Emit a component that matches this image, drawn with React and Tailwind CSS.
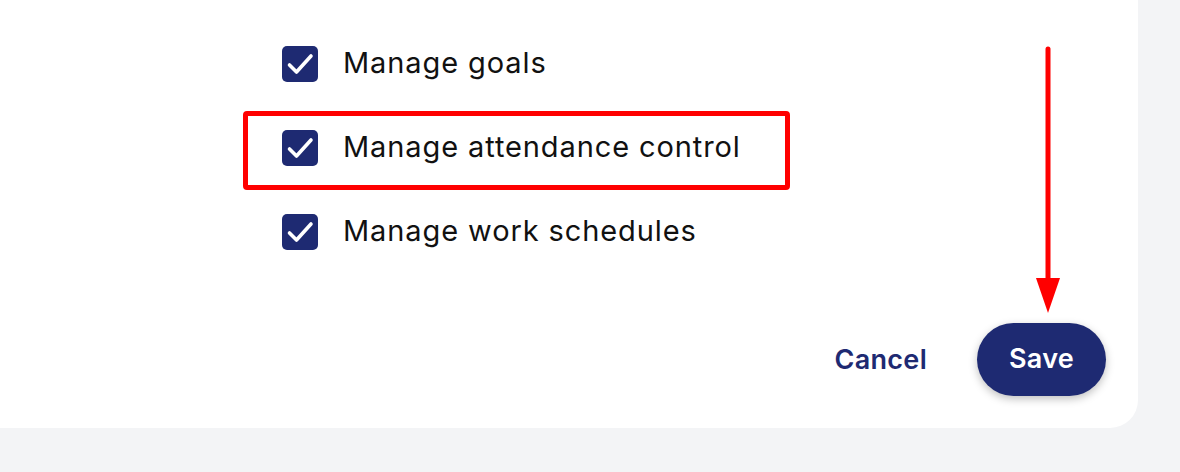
import React from "react";

const font = { fontFamily: "Inter, 'Noto Sans', sans-serif" };

const items = ["Manage goals", "Manage attendance control", "Manage work schedules"];

const CheckBox = () => (
  <div className="w-9 h-9 rounded-[5px] bg-[#1e2a72] flex items-center justify-center shrink-0">
    <svg width="36" height="36" viewBox="0 0 36 36" fill="none">
      <path
        d="M7.5 19 L14.5 26 L29 10"
        stroke="white"
        strokeWidth="3.6"
        strokeLinecap="round"
        strokeLinejoin="round"
      />
    </svg>
  </div>
);

export default function App() {
  return (
    <div className="w-[1180px] h-[472px] bg-[#f3f4f6] overflow-hidden" style={font}>
      <div className="relative w-[1138px] h-[428px] bg-white rounded-br-[28px] pt-[46px] pr-[32px]">
        {/* permission list */}
        <div className="flex flex-col gap-[48px] pl-[282px]">
          {items.map((label) => (
            <div key={label} className="flex items-center gap-[25px] h-9">
              <CheckBox />
              <span className="text-[29px] leading-none text-[#111] tracking-[0.9px] -mt-[4px]">{label}</span>
            </div>
          ))}
        </div>

        {/* actions */}
        <div className="flex items-center justify-end gap-[50px] mt-[73px]">
          <button className="text-[27px] font-semibold text-[#1e2a72] tracking-[0.3px] mt-[2px]">Cancel</button>
          <button className="w-[129px] h-[73px] rounded-full bg-[#1e2a72] text-white text-[27px] font-semibold tracking-[0.3px] shadow-[0_3px_8px_rgba(0,0,0,0.25)]">
            Save
          </button>
        </div>

        {/* annotation: highlight box */}
        <div className="absolute left-[243px] top-[111px] w-[547px] h-[79px] border-[5px] border-[#ff0000] rounded-[4px]" />

        {/* annotation: arrow */}
        <svg className="absolute left-[1030px] top-[44px]" width="36" height="272" viewBox="0 0 36 272">
          <line x1="18" y1="5" x2="18" y2="240" stroke="#ff0000" strokeWidth="5" strokeLinecap="round" />
          <polygon points="6,234 30,234 18,269" fill="#ff0000" />
        </svg>
      </div>
    </div>
  );
}
